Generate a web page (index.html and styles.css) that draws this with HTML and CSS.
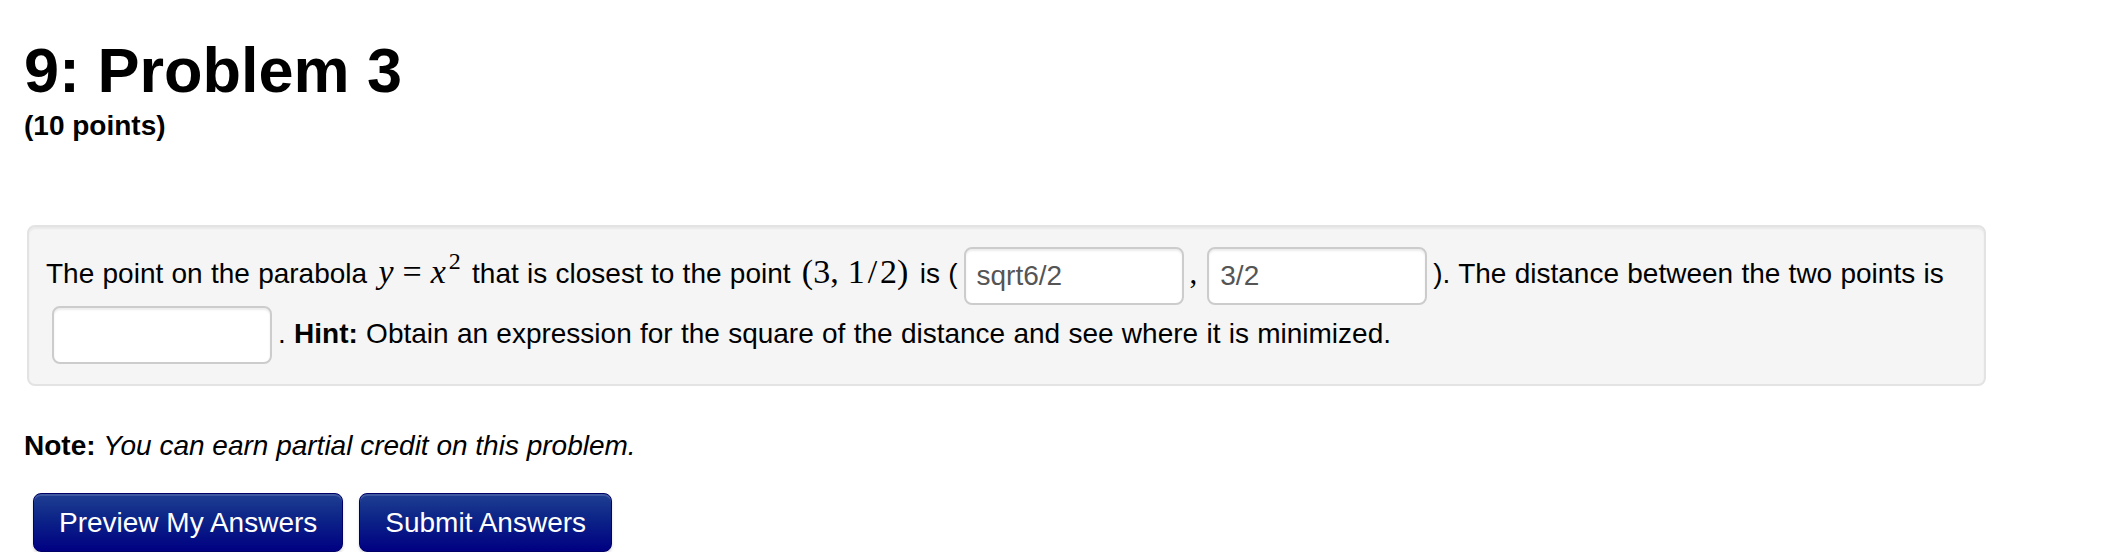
FILE: index.html
```html
<!DOCTYPE html>
<html lang="en">
    <head>
        <meta charset="UTF-8" />
        <title>9: Problem 3</title>
        <link rel="stylesheet" href="styles.css">
    </head>
    <body>
        <div id="wrapper">
            <h2 class="problem_title">9: Problem 3</h2>
            <div class="problem_points">(10 points)</div>

            <div class="problem_well">
                <p class="problem_text">The point on the parabola <span class="math"><i>y</i><span class="rel">=</span><i>x</i><sup>2</sup></span> that is closest to the point <span class="math point">(3<span class="comma">,</span>1<span class="slash">/</span>2)</span> is (<input type="text" class="answer" value="sqrt6/2"><span class="mcomma">,</span><input type="text" class="answer" value="3/2">). The distance between the two points is <input type="text" class="answer" value="">. <b>Hint:</b> Obtain an expression for the square of the distance and see where it is minimized.</p>
            </div>

            <p class="note"><b>Note:</b> <i>You can earn partial credit on this problem.</i></p>

            <div class="buttons">
                <button class="btn_blue">Preview My Answers</button>
                <button class="btn_blue">Submit Answers</button>
            </div>
        </div>
    </body>
</html>
```

FILE: styles.css
```css
body {
    margin: 0;
    background-color: #fff;
    color: #000;
    font-family: "Liberation Sans", Arial, Helvetica, sans-serif;
    font-size: 28px;
}
#wrapper {
    padding: 30px 0 0 24px;
}
.problem_title {
    margin: 0;
    font-size: 63px;
    line-height: 80px;
    font-weight: bold;
}
.problem_points {
    font-size: 28px;
    line-height: 31px;
    font-weight: bold;
}
.problem_well {
    margin: 84px 0 0 3px;
    width: 1959px;
    box-sizing: border-box;
    padding: 16px 6px 20px 17px;
    background-color: #f5f5f5;
    border: 2px solid #e3e3e3;
    border-radius: 8px;
    box-shadow: inset 0 2px 2px rgba(0,0,0,0.05);
}
.problem_text {
    margin: 0;
    line-height: 58px;
    word-spacing: 0.5px;
}
.math {
    font-family: "Liberation Serif", "Times New Roman", serif;
    font-size: 34px;
    margin: 0 3px;
    word-spacing: 0;
}
.math i { font-style: italic; }
.math sup {
    font-size: 24px;
    line-height: 0;
    vertical-align: 14px;
    margin-left: 3px;
}
.rel { margin: 0 9px; }
.comma { margin-right: 9px; }
.slash { margin: 0 3px; }
.mcomma {
    font-family: "Liberation Serif", serif;
    font-size: 31px;
    margin: 0 4px 0 0;
}
.answer {
    width: 220px;
    height: 58px;
    box-sizing: border-box;
    margin: 0 6px;
    padding: 0 11px;
    vertical-align: middle;
    font-family: "Liberation Sans", Arial, sans-serif;
    font-size: 28px;
    color: #555;
    background-color: #fff;
    border: 2px solid #ccc;
    border-radius: 8px;
    box-shadow: inset 0 2px 2px rgba(0,0,0,0.075);
    outline: none;
}
.note {
    margin: 40px 0 0 0;
    line-height: 40px;
}
.buttons {
    margin-top: 27px;
    padding-left: 9px;
    display: flex;
    gap: 16px;
}
.btn_blue {
    height: 59px;
    box-sizing: border-box;
    padding: 0 25px;
    font-family: "Liberation Sans", Arial, sans-serif;
    font-size: 28px;
    color: #fff;
    background: linear-gradient(to bottom, #1f3f92 0%, #0d2688 40%, #000082 100%);
    border: 1px solid #000066;
    border-radius: 8px;
    box-shadow: inset 0 2px 0 rgba(255,255,255,0.15), 0 2px 3px rgba(0,0,0,0.15);
    cursor: pointer;
}
```
